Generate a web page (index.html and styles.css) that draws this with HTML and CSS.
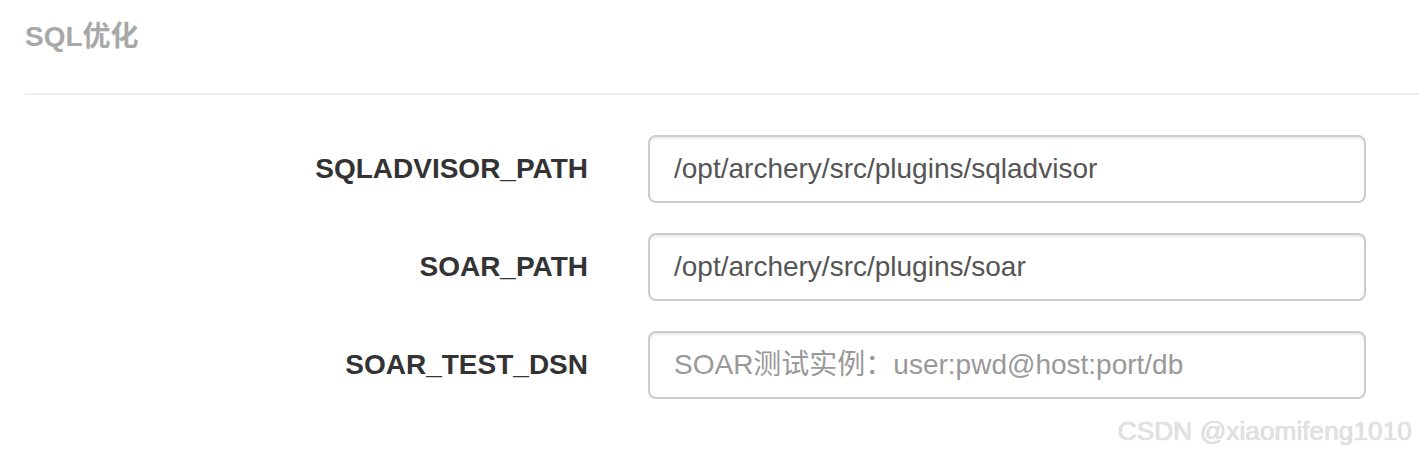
FILE: index.html
```html
<!DOCTYPE html>
<html lang="zh">
<head>
<meta charset="utf-8">
<title>SQL优化</title>
<link rel="stylesheet" href="styles.css">
</head>
<body>
<div class="page">
  <div class="section-head">
    <h4 class="section-title">SQL优化</h4>
  </div>
  <hr class="divider">
  <form class="form">
    <div class="form-row">
      <label class="form-label">SQLADVISOR_PATH</label>
      <div class="form-field"><input class="form-input" type="text" value="/opt/archery/src/plugins/sqladvisor"></div>
    </div>
    <div class="form-row">
      <label class="form-label">SOAR_PATH</label>
      <div class="form-field"><input class="form-input" type="text" value="/opt/archery/src/plugins/soar"></div>
    </div>
    <div class="form-row">
      <label class="form-label">SOAR_TEST_DSN</label>
      <div class="form-field"><input class="form-input" type="text" placeholder="SOAR测试实例：user:pwd@host:port/db"></div>
    </div>
  </form>
  <div class="watermark">CSDN @xiaomifeng1010</div>
</div>
</body>
</html>
```

FILE: styles.css
```css
html, body {
  margin: 0;
  padding: 0;
  background: #fff;
}
body {
  font-family: "Liberation Sans", Arial, "Noto Sans CJK SC", sans-serif;
  width: 1419px;
  height: 455px;
  overflow: hidden;
}
.page {
  position: relative;
  height: 455px;
}
.section-head {
  padding: 17px 0 0 25px;
}
.section-title {
  margin: 0;
  font-size: 28px;
  line-height: 40px;
  font-weight: bold;
  color: #a8a8a8;
}
.divider {
  margin: 36px 0 0 25px;
  border: 0;
  border-top: 2px solid #eeeeee;
  height: 0;
}
.form {
  margin-top: 40px;
}
.form-row {
  display: grid;
  grid-template-columns: 618px 778px;
  margin-bottom: 30px;
}
.form-label {
  text-align: right;
  padding: 14px 30px 0 0;
  font-size: 28px;
  line-height: 40px;
  font-weight: bold;
  color: #333333;
}
.form-field {
  padding: 0 30px;
}
.form-input {
  box-sizing: border-box;
  display: block;
  width: 100%;
  height: 68px;
  margin: 0;
  padding: 0 24px;
  border: 2px solid #cccccc;
  border-radius: 8px;
  box-shadow: inset 0 2px 2px rgba(0, 0, 0, 0.075);
  font-family: "Liberation Sans", Arial, "Noto Sans CJK SC", sans-serif;
  font-size: 28px;
  color: #555555;
  background: #fff;
  outline: none;
}
.form-input::placeholder {
  color: #999999;
  opacity: 1;
}
.watermark {
  position: absolute;
  right: 7px;
  top: 416px;
  font-family: "Liberation Sans", Arial, sans-serif;
  font-size: 26.3px;
  font-weight: normal;
  line-height: 30px;
  color: #e2e2e2;
  text-shadow: 0 0 1px rgba(0, 0, 0, 0.25);
}
```
